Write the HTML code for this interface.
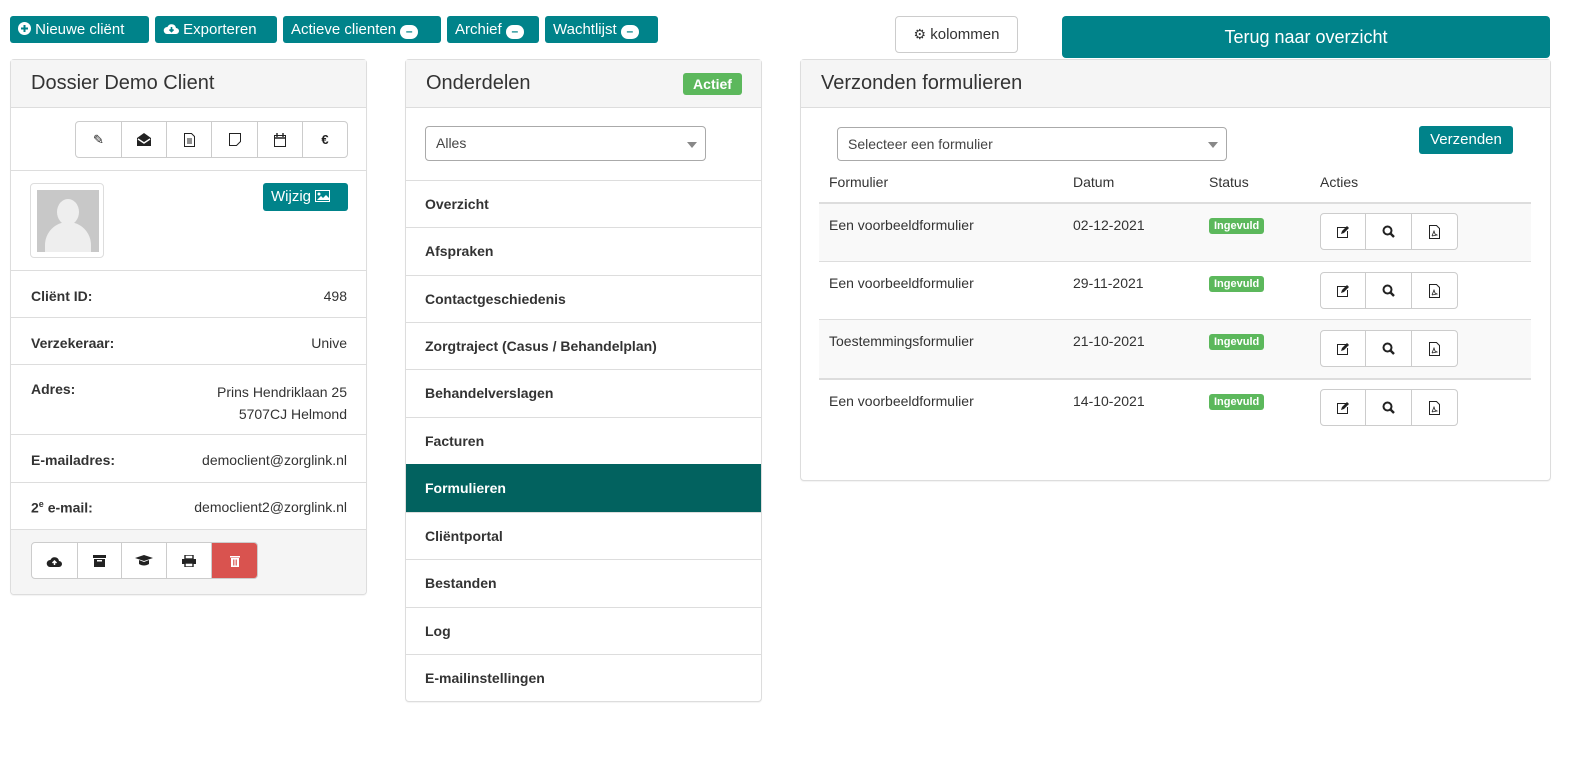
<!DOCTYPE html>
<html><head><meta charset="utf-8"><style>
*{box-sizing:border-box;margin:0;padding:0}
body{width:1577px;height:767px;background:#fff;font-family:"Liberation Sans",Arial,sans-serif;color:#333;position:relative;overflow:hidden;font-size:14px}
.a{position:absolute}
.tb{position:absolute;top:16px;height:27px;background:#00838a;color:#fff;border-radius:3px;font-size:15px;line-height:27px;padding-left:8px;white-space:nowrap}
.pill{display:inline-block;width:18px;height:14px;background:#fff;border-radius:7px;color:#00838a;font-size:12px;line-height:12px;text-align:center;vertical-align:-1px;font-weight:bold}
.panel{position:absolute;border:1px solid #ddd;border-radius:4px;background:#fff;box-shadow:0 1px 1px rgba(0,0,0,.05)}
.ph{height:48px;background:#f5f5f5;border-bottom:1px solid #ddd;font-size:20px;line-height:46px;padding-left:20px;color:#333}
.hl{position:absolute;left:0;right:0;height:1px;background:#ddd}
.grp{position:absolute;display:flex;border:1px solid #ccc;border-radius:4px;overflow:hidden;background:#fff}
.grp div{border-right:1px solid #ccc;display:flex;align-items:center;justify-content:center;color:#222;font-size:13px}
.grp div:last-child{border-right:0}
.lbl{position:absolute;left:20px;font-weight:bold;font-size:14px}
.val{position:absolute;right:19px;text-align:right;font-size:14px}
.item{position:absolute;left:0;right:0;height:47px;border-top:1px solid #ddd;font-weight:bold;font-size:14px;padding-left:19px;line-height:46px;color:#333}
.sel{position:absolute;border:1px solid #aaa;border-radius:4px;background:#fff;font-size:14px;padding-left:10px;color:#444}
.sel:after{content:"";position:absolute;right:8px;top:50%;margin-top:-2px;border-left:5px solid transparent;border-right:5px solid transparent;border-top:6px solid #888}
.row{position:absolute;left:18px;width:712px;height:59px;border-top:1px solid #ddd}
.row span{position:absolute;top:13px;font-size:14px}
.badge{position:absolute;top:14px;left:390px;background:#5cb85c;color:#fff;font-size:11px;font-weight:bold;padding:2px 5px;border-radius:3px}
</style></head><body>

<div class="tb" style="left:10px;width:139px"><svg width="13" height="13" viewBox="0 0 13 13" style="vertical-align:-1px"><circle cx="6.5" cy="6.5" r="6.5" fill="#fff"/><path d="M6.5 3v7M3 6.5h7" stroke="#00838a" stroke-width="2"/></svg> Nieuwe cliënt</div>
<div class="tb" style="left:155px;width:122px"><svg width="16" height="13" viewBox="0 0 16 13" style="vertical-align:-1px"><path d="M4 12h9a3 3 0 0 0 0-6 4.5 4.5 0 0 0-8.6-1A3.5 3.5 0 0 0 4 12z" fill="#fff"/><path d="M8.5 5v4M6.5 7.5l2 2 2-2" stroke="#00838a" stroke-width="1.6" fill="none"/></svg> Exporteren</div>
<div class="tb" style="left:283px;width:158px">Actieve clienten <span class="pill">–</span></div>
<div class="tb" style="left:447px;width:92px">Archief <span class="pill">–</span></div>
<div class="tb" style="left:545px;width:113px">Wachtlijst <span class="pill">–</span></div>

<div class="a" style="left:895px;top:16px;width:123px;height:37px;border:1px solid #ccc;border-radius:4px;font-size:15px;line-height:35px;text-align:center;color:#333"><span style="font-size:14px">⚙</span> kolommen</div>
<div class="a" style="left:1062px;top:16px;width:488px;height:42px;background:#00838a;border-radius:4px;color:#fff;font-size:18px;line-height:42px;text-align:center">Terug naar overzicht</div>

<!-- Panel 1 -->
<div class="panel" style="left:10px;top:59px;width:357px;height:536px">
 <div class="ph">Dossier Demo Client</div>
 <div class="grp" style="left:64px;top:61px;width:273px;height:37px">
  <div style="width:46px">✎</div><div style="width:45px"><svg width="14" height="13" viewBox="0 0 14 13"><path d="M0 5L7 0l7 5v8H0z" fill="#222"/><path d="M1 6l6 4 6-4" stroke="#fff" stroke-width="1.4" fill="none"/></svg></div><div style="width:45px"><svg width="11" height="14"><path d="M.5.5h7l3 3v10h-10z" fill="none" stroke="#222"/><path d="M3 6h5M3 8h5M3 10h5" stroke="#222"/></svg></div><div style="width:46px"><svg width="12" height="13"><path d="M.5.5h11v8l-4 4h-7z" fill="none" stroke="#222"/></svg></div><div style="width:45px"><svg width="12" height="14"><rect x=".5" y="2.5" width="11" height="11" fill="none" stroke="#222"/><path d="M.5 5h11M3 0v4M9 0v4" stroke="#222" stroke-width="1.4"/></svg></div><div style="width:44px;font-weight:bold">€</div>
 </div>
 <div class="hl" style="top:110px"></div>
 <div class="a" style="left:19px;top:123px;width:74px;height:75px;border:1px solid #ddd;border-radius:4px;padding:6px 5px 5px 6px"><div style="width:62px;height:62px;background:#c8c8c8;position:relative;overflow:hidden"><div class="a" style="left:20px;top:9px;width:22px;height:26px;border-radius:50%;background:#eee"></div><div class="a" style="left:8px;top:32px;width:46px;height:40px;border-radius:23px 23px 0 0;background:#eee"></div></div></div>
 <div class="a" style="left:252px;top:123px;width:85px;height:28px;background:#00838a;border-radius:3px;color:#fff;font-size:15px;line-height:27px;padding-left:8px">Wijzig <svg width="15" height="12" style="vertical-align:-1px"><rect x=".5" y=".5" width="14" height="11" fill="none" stroke="#fff"/><circle cx="4" cy="4" r="1.5" fill="#fff"/><path d="M2 10l4-4 2 2 3-3 3 3v2z" fill="#fff"/></svg></div>
 <div class="hl" style="top:210px"></div>
 <div class="lbl" style="top:228px">Cliënt ID:</div><div class="val" style="top:228px">498</div>
 <div class="hl" style="top:257px"></div>
 <div class="lbl" style="top:275px">Verzekeraar:</div><div class="val" style="top:275px">Unive</div>
 <div class="hl" style="top:304px"></div>
 <div class="lbl" style="top:321px">Adres:</div><div class="val" style="top:321px;line-height:22px">Prins Hendriklaan 25<br>5707CJ Helmond</div>
 <div class="hl" style="top:374px"></div>
 <div class="lbl" style="top:392px">E-mailadres:</div><div class="val" style="top:392px">democlient@zorglink.nl</div>
 <div class="hl" style="top:422px"></div>
 <div class="lbl" style="top:439px">2<sup style="font-size:9px">e</sup> e-mail:</div><div class="val" style="top:439px">democlient2@zorglink.nl</div>
 <div class="a" style="left:0;right:0;top:469px;bottom:0;background:#f5f5f5;border-top:1px solid #ddd;border-radius:0 0 4px 4px"></div>
 <div class="grp" style="left:20px;top:482px;width:227px;height:37px">
  <div style="width:46px"><svg width="16" height="12"><path d="M4 12h9a3 3 0 0 0 0-6 4.5 4.5 0 0 0-8.6-1A3.5 3.5 0 0 0 4 12z" fill="#222"/><path d="M8.5 10V6M6.5 8l2-2 2 2" stroke="#fff" stroke-width="1.5" fill="none"/></svg></div>
  <div style="width:45px"><svg width="13" height="12"><rect x="0" y="0" width="13" height="3" fill="#222"/><rect x="1" y="4" width="11" height="8" fill="#222"/><rect x="4" y="5" width="5" height="1.5" fill="#fff"/></svg></div>
  <div style="width:45px"><svg width="18" height="11"><path d="M0 3L9 0l9 3-9 3z" fill="#222"/><path d="M4 5v4c3 2 7 2 10 0V5L9 7z" fill="#222"/></svg></div>
  <div style="width:46px"><svg width="14" height="12"><rect x="3" y="0" width="8" height="4" fill="none" stroke="#222" stroke-width="1.4"/><rect x="0" y="4" width="14" height="5" fill="#222"/><rect x="3" y="8" width="8" height="4" fill="#fff" stroke="#222" stroke-width="1.4"/></svg></div>
  <div style="width:45px;background:#d9534f;border-color:#d43f3a"><svg width="10" height="12"><rect x="0" y="1" width="10" height="1.5" fill="#fff"/><rect x="1" y="3" width="8" height="9" fill="#fff"/><path d="M3.5 4.5v6M5 4.5v6M6.5 4.5v6" stroke="#d9534f" stroke-width=".8"/></svg></div>
 </div>
</div>

<!-- Panel 2 -->
<div class="panel" style="left:405px;top:59px;width:357px;height:643px">
 <div class="ph">Onderdelen</div>
 <div class="a" style="left:277px;top:13px;width:59px;height:22px;background:#5cb85c;color:#fff;font-weight:bold;font-size:14px;line-height:22px;text-align:center;border-radius:3px">Actief</div>
 <div class="sel" style="left:19px;top:66px;width:281px;height:35px;line-height:33px">Alles</div>
 <div class="item" style="top:120px">Overzicht</div>
 <div class="item" style="top:167px">Afspraken</div>
 <div class="item" style="top:215px">Contactgeschiedenis</div>
 <div class="item" style="top:262px">Zorgtraject (Casus / Behandelplan)</div>
 <div class="item" style="top:309px">Behandelverslagen</div>
 <div class="item" style="top:357px">Facturen</div>
 <div class="item" style="top:404px;background:#02625f;color:#fff;border-color:#02625f;height:48px">Formulieren</div>
 <div class="item" style="top:452px">Cliëntportal</div>
 <div class="item" style="top:499px">Bestanden</div>
 <div class="item" style="top:547px">Log</div>
 <div class="item" style="top:594px">E-mailinstellingen</div>
</div>

<!-- Panel 3 -->
<div class="panel" style="left:800px;top:59px;width:751px;height:422px">
 <div class="ph">Verzonden formulieren</div>
 <div class="sel" style="left:36px;top:67px;width:390px;height:34px;line-height:32px">Selecteer een formulier</div>
 <div class="a" style="left:618px;top:66px;width:94px;height:28px;background:#00838a;border-radius:3px;color:#fff;font-size:15px;line-height:27px;text-align:center">Verzenden</div>
 <div class="a" style="left:28px;top:114px;font-size:14px">Formulier</div>
 <div class="a" style="left:272px;top:114px;font-size:14px">Datum</div>
 <div class="a" style="left:408px;top:114px;font-size:14px">Status</div>
 <div class="a" style="left:519px;top:114px;font-size:14px">Acties</div>
 <div class="row" style="top:142px;background:#f9f9f9;border-top:2px solid #ddd"><span style="left:10px">Een voorbeeldformulier</span><span style="left:254px">02-12-2021</span><div class="badge">Ingevuld</div></div>
 <div class="row" style="top:201px"><span style="left:10px">Een voorbeeldformulier</span><span style="left:254px">29-11-2021</span><div class="badge">Ingevuld</div></div>
 <div class="row" style="top:259px;background:#f9f9f9"><span style="left:10px">Toestemmingsformulier</span><span style="left:254px">21-10-2021</span><div class="badge">Ingevuld</div></div>
 <div class="row" style="top:318px;border-top:2px solid #ddd"><span style="left:10px">Een voorbeeldformulier</span><span style="left:254px">14-10-2021</span><div class="badge">Ingevuld</div></div>
 <div class="grp" style="left:519px;top:153px;width:138px;height:37px"><div style="width:46px"><svg width="12" height="12"><path d="M9 1.5H.5v10h10V5" fill="none" stroke="#222"/><path d="M4 8l1-3 5-5 2 2-5 5z" fill="#222"/></svg></div><div style="width:46px"><svg width="13" height="13"><circle cx="5.5" cy="5.5" r="4" fill="none" stroke="#222" stroke-width="2"/><path d="M8.5 8.5l3.5 3.5" stroke="#222" stroke-width="2.4"/></svg></div><div style="width:46px"><svg width="11" height="14"><path d="M.5.5h7l3 3v10h-10z" fill="none" stroke="#222"/><path d="M3 11l2-5 1 3 2 1-5 1" fill="none" stroke="#222" stroke-width=".8"/></svg></div></div>
 <div class="grp" style="left:519px;top:212px;width:138px;height:37px"><div style="width:46px"><svg width="12" height="12"><path d="M9 1.5H.5v10h10V5" fill="none" stroke="#222"/><path d="M4 8l1-3 5-5 2 2-5 5z" fill="#222"/></svg></div><div style="width:46px"><svg width="13" height="13"><circle cx="5.5" cy="5.5" r="4" fill="none" stroke="#222" stroke-width="2"/><path d="M8.5 8.5l3.5 3.5" stroke="#222" stroke-width="2.4"/></svg></div><div style="width:46px"><svg width="11" height="14"><path d="M.5.5h7l3 3v10h-10z" fill="none" stroke="#222"/><path d="M3 11l2-5 1 3 2 1-5 1" fill="none" stroke="#222" stroke-width=".8"/></svg></div></div>
 <div class="grp" style="left:519px;top:270px;width:138px;height:37px"><div style="width:46px"><svg width="12" height="12"><path d="M9 1.5H.5v10h10V5" fill="none" stroke="#222"/><path d="M4 8l1-3 5-5 2 2-5 5z" fill="#222"/></svg></div><div style="width:46px"><svg width="13" height="13"><circle cx="5.5" cy="5.5" r="4" fill="none" stroke="#222" stroke-width="2"/><path d="M8.5 8.5l3.5 3.5" stroke="#222" stroke-width="2.4"/></svg></div><div style="width:46px"><svg width="11" height="14"><path d="M.5.5h7l3 3v10h-10z" fill="none" stroke="#222"/><path d="M3 11l2-5 1 3 2 1-5 1" fill="none" stroke="#222" stroke-width=".8"/></svg></div></div>
 <div class="grp" style="left:519px;top:329px;width:138px;height:37px"><div style="width:46px"><svg width="12" height="12"><path d="M9 1.5H.5v10h10V5" fill="none" stroke="#222"/><path d="M4 8l1-3 5-5 2 2-5 5z" fill="#222"/></svg></div><div style="width:46px"><svg width="13" height="13"><circle cx="5.5" cy="5.5" r="4" fill="none" stroke="#222" stroke-width="2"/><path d="M8.5 8.5l3.5 3.5" stroke="#222" stroke-width="2.4"/></svg></div><div style="width:46px"><svg width="11" height="14"><path d="M.5.5h7l3 3v10h-10z" fill="none" stroke="#222"/><path d="M3 11l2-5 1 3 2 1-5 1" fill="none" stroke="#222" stroke-width=".8"/></svg></div></div>
</div>
</body></html>
